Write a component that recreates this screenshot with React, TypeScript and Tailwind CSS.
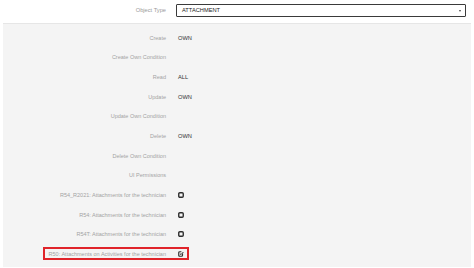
import React from "react";

const rows: { label: string; value?: string; box?: "empty" | "checked" }[] = [
  { label: "Create", value: "OWN" },
  { label: "Create Own Condition" },
  { label: "Read", value: "ALL" },
  { label: "Update", value: "OWN" },
  { label: "Update Own Condition" },
  { label: "Delete", value: "OWN" },
  { label: "Delete Own Condition" },
  { label: "UI Permissions" },
  { label: "R54_R2021: Attachments for the technician", box: "empty" },
  { label: "R54: Attachments for the technician", box: "empty" },
  { label: "R54T: Attachments for the technician", box: "empty" },
  { label: "R50: Attachments on Activities for the technician", box: "checked" },
];

function Box({ checked }: { checked: boolean }) {
  return (
    <svg width="6" height="6" viewBox="0 0 6 6" className="block">
      {checked ? (
        <>
          <path d="M4.5 2.6 V4.2 Q4.5 5.25 3.5 5.25 H1.8 Q0.75 5.25 0.75 4.2 V1.8 Q0.75 0.75 1.8 0.75 H3.4" fill="none" stroke="#333" strokeWidth="1.2" />
          <path d="M2 2.7 L3 3.6 L5.4 1" fill="none" stroke="#333" strokeWidth="1" />
        </>
      ) : (
        <rect x="0.75" y="0.75" width="4.5" height="4.5" rx="1.1" fill="none" stroke="#2e2e2e" strokeWidth="1.4" />
      )}
    </svg>
  );
}

export default function App() {
  return (
    <div
      className="w-[474px] h-[268px] bg-white overflow-hidden flex flex-col"
      style={{ fontFamily: '"Liberation Sans", Arial, sans-serif' }}
    >
      <div className="h-[23px] flex items-center pb-[3px] pt-[1px]">
        <div className="w-[166px] text-right text-[5.7px] text-[#9a9a9a]">Object Type</div>
        <div className="ml-[10px] w-[290px] h-[13px] border border-[#3a3a3a] rounded-[1px] flex items-center pl-[5px] pr-[4px] bg-white">
          <span className="text-[5.7px] text-[#222] flex-1">ATTACHMENT</span>
          <span className="w-0 h-0 border-l-[1.5px] border-r-[1.5px] border-t-[2px] border-l-transparent border-r-transparent border-t-[#444]" />
        </div>
      </div>
      <div className="mx-[3px] h-[244px] bg-[#f4f4f4] border-t border-[#e6e6e6] pt-[4px] flex flex-col">
        {rows.map((r, i) => (
          <div key={i} className="relative h-[19.67px] flex items-center">
            <div className="w-[163px] text-right text-[5.5px] text-[#a3a3a3] whitespace-nowrap">{r.label}</div>
            <div className="ml-[12px] text-[5.7px] text-[#333]">
              {r.value}
              {r.box && <Box checked={r.box === "checked"} />}
            </div>
            {r.box === "checked" && (
              <div className="absolute left-[40px] top-[3px] w-[146px] h-[13px] border-2 border-[#e0242a]" />
            )}
          </div>
        ))}
      </div>
    </div>
  );
}
